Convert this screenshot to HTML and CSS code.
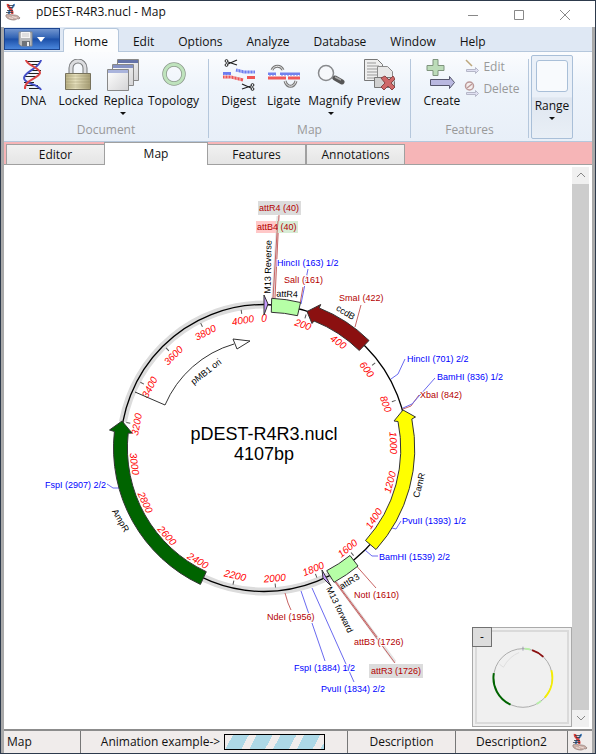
FILE: index.html
```html
<!DOCTYPE html>
<html lang="en">
  <head>
    <meta charset="UTF-8" />
    <meta name="viewport" content="width=device-width, initial-scale=1.0" />
    <title>pDEST-R4R3.nucl - Map</title>
    <link rel="stylesheet" href="styles.css">
  </head>
  <body>
    <!-- shared drawings -->
    <svg class="defs" aria-hidden="true">
      <defs>
        <symbol id="logo" viewBox="0 0 18 18">
          <path d="M10 1c1 4-6 4-5 10" fill="none" stroke="#3a78b8" stroke-width="2" />
          <path d="M4 1c-1 4 6 5 4 10" fill="none" stroke="#d8403a" stroke-width="2.500" />
          <path d="M4 2.500h6M5 4.500h4M3 7.500h6M2 9.500h7" stroke="#303848" stroke-width=".8" />
          <path d="M2 12c2-2 5 0 7 0s5 0 7 3l-1 1c-2-1-3 1-5 1-4 0-9-2-8-5z" fill="#cbb0a8" stroke="#8b7772" stroke-width=".7" />
          <path d="M8 13.500l5 1.500M5 14.500l4 1" stroke="#f3e5df" stroke-width=".8" />
        </symbol>
        <linearGradient id="silver" x1="0" y1="0" x2="1" y2="1">
          <stop offset="0" stop-color="#fff" />
          <stop offset="1" stop-color="#d4d4d6" />
        </linearGradient>
        <linearGradient id="brass" x1="0" y1="0" x2="1" y2="0">
          <stop offset="0" stop-color="#b9b185" />
          <stop offset=".4" stop-color="#e6e0bd" />
          <stop offset="1" stop-color="#a79e75" />
        </linearGradient>
        <symbol id="scissors" viewBox="0 0 14 8">
          <path d="M4 3l9 3M4 5l9-4" stroke="#222" stroke-width="1.300" />
          <circle cx="2.500" cy="2" r="1.400" fill="none" stroke="#222" />
          <circle cx="2.500" cy="6" r="1.400" fill="none" stroke="#222" />
        </symbol>
      </defs>
    </svg>

    <div class="window">
      <header class="titlebar">
        <svg class="logo"><use href="#logo" /></svg>
        <h1>pDEST-R4R3.nucl - Map</h1>
        <button aria-label="Minimize"><svg viewBox="0 0 12 12"><path d="M1 6.500h10" /></svg></button>
        <button aria-label="Maximize"><svg viewBox="0 0 12 12"><path d="M1.500 1.500h9v9h-9z" /></svg></button>
        <button aria-label="Close"><svg viewBox="0 0 12 12"><path d="M1 1l10 10M11 1L1 11" /></svg></button>
      </header>

      <div class="frame">
        <nav class="menu">
          <button class="file" aria-label="File">
            <svg width="28" height="16" viewBox="0 0 28 16">
              <path d="M1 1h13v14H3l-2-2z" fill="#b9bbbd" stroke="#85888d" />
              <path d="M3 1h9v6H3z" fill="#f5f5f5" />
              <path d="M4 3h7M4 5h7" stroke="#c9c9c9" />
              <path d="M4 10h8v5H4z" fill="#6f7378" />
              <path d="M9 11h2v4H9z" fill="#eee" />
              <path d="M19 6h8l-4 5z" fill="#fff" />
            </svg>
          </button>
          <button class="active">Home</button>
          <button>Edit</button>
          <button>Options</button>
          <button>Analyze</button>
          <button>Database</button>
          <button>Window</button>
          <button>Help</button>
        </nav>

        <div class="ribbon">
          <section class="group">
            <div class="tools">
              <button class="tool">
                <svg viewBox="0 0 32 32">
                  <path d="M10 2.500h14M12 5.500h9M13 11.500h11M10 14.500h13M8 17.500h12M7 23.500h10M8 26.500h13M12 29.500h11" stroke="#222" stroke-width="1.200" />
                  <path d="M24 1C23 9 7 13 7 19s15 6 17 12" fill="none" stroke="#4450c8" stroke-width="2" />
                  <path d="M9 1c0 5 15 8 14 13S7 21 8 30" fill="none" stroke="#dc4545" stroke-width="2" />
                </svg>
                DNA
              </button>
              <button class="tool">
                <svg viewBox="0 0 32 32">
                  <path d="M9 15V9a7 7 0 0 1 14 0v6" fill="none" stroke="#77797b" stroke-width="5" />
                  <path d="M9 15V9a7 7 0 0 1 14 0v6" fill="none" stroke="#dcdde0" stroke-width="3" />
                  <path d="M3.500 14.500h25v16h-25z" fill="url(#brass)" stroke="#77725d" />
                  <path d="M4 17h24M4 20h24M4 23h24M4 26h24M4 28h24" stroke="#918963" opacity=".4" />
                </svg>
                Locked
              </button>
              <button class="tool">
                <svg viewBox="0 0 32 32">
                  <path d="M10.500.500h21v21h-21z" fill="url(#silver)" stroke="#888" />
                  <path d="M11 1h20v3H11z" fill="#6573a8" />
                  <path d="M5.500 5.500h21v21h-21z" fill="url(#silver)" stroke="#888" />
                  <path d="M6 6h20v3H6z" fill="#8592c4" />
                  <path d="M.500 10.500h21v21h-21z" fill="url(#silver)" stroke="#888" />
                  <path d="M1 11h20v3H1z" fill="#aab4dc" />
                </svg>
                Replica
                <i class="arrow"></i>
              </button>
              <button class="tool">
                <svg viewBox="0 0 32 32">
                  <circle cx="17" cy="15" r="9.500" fill="none" stroke="#8a978a" stroke-width="4.500" />
                  <circle cx="17" cy="15" r="9.500" fill="none" stroke="#bfe3bd" stroke-width="3" />
                </svg>
                Topology
              </button>
            </div>
            <h2>Document</h2>
          </section>

          <section class="group">
            <div class="tools">
              <button class="tool">
                <svg viewBox="0 0 32 32">
                  <use href="#scissors" x="1" y="0" width="14" height="8" />
                  <use href="#scissors" width="14" height="8" transform="translate(32 24) scale(-1 1)" />
                  <path d="M0 14.500h8M13 11l8 2h11M1 16v-2M4 16v-2" fill="none" stroke="#6c7df0" stroke-width="3" />
                  <path d="M0 18h8l12 3M24 18.500h8" fill="none" stroke="#ee5555" stroke-width="3" />
                  <path d="M2 15.500v4M5 15.500v4M8 16v4M11 17v4M14 18v4M17 19v4M15 10v4M18 10v4M21 11v4M24 11v4M27 11v4M30 11v4" stroke="#f4f7fc" stroke-width=".7" />
                </svg>
                Digest
              </button>
              <button class="tool">
                <svg viewBox="0 0 32 32">
                  <path d="M4 11c2-5 9-5 11 0M17 22c2 7 9 7 11 0" fill="none" stroke="#777" stroke-width="3" />
                  <path d="M4 11c2-5 9-5 11 0M17 22c2 7 9 7 11 0" fill="none" stroke="#eee" />
                  <path d="M0 15h8M12 15h20" stroke="#7282ee" stroke-width="3" />
                  <path d="M0 19h18M20 19h12" stroke="#f05a5a" stroke-width="3" />
                  <path d="M0 16.500h32" stroke="#fff" stroke-dasharray="1 2" />
                </svg>
                Ligate
              </button>
              <button class="tool">
                <svg viewBox="0 0 32 32">
                  <path d="M17 18l4 2" stroke="#888" stroke-width="2" />
                  <path d="M20 19l7 4" stroke="#555" stroke-width="5" stroke-linecap="round" />
                  <path d="M20 18l6 3" stroke="#aaa" stroke-width="1.500" />
                  <circle cx="11" cy="14" r="7.500" fill="#f6f8fb" stroke="#888a8d" stroke-width="1.500" />
                </svg>
                Magnify
                <i class="arrow"></i>
              </button>
              <button class="tool">
                <svg viewBox="0 0 32 32">
                  <path d="M1.500.500h13l5 5v16h-18z" fill="#eee" stroke="#777" />
                  <path d="M4 4h9M4 7h12M4 10h12M4 13h12M4 16h12M4 19h9" stroke="#999" />
                  <path d="M14.500 7.500h10l5 5v7h-15z" fill="#e8e8e8" stroke="#8b8b8b" />
                  <path d="M11.500 18.500h18l2 4v6h-20z" fill="#d0d0d0" stroke="#777" />
                  <path d="M18 19l4-2 4 4 4-4 2 3-4 4 4 4-3 3-4-4-4 4-3-3 4-4z" fill="#cf6868" stroke="#8a4444" />
                </svg>
                Preview
              </button>
            </div>
            <h2>Map</h2>
          </section>

          <section class="group">
            <div class="tools">
              <button class="tool">
                <svg viewBox="0 0 32 32">
                  <path d="M7 .500h5v6h6v5h-6v5H7v-5H1v-5h6z" fill="#bcdcb9" stroke="#7f947e" />
                  <path d="M4.500 20.500h19v-3l5 6-5 6v-3h-19z" fill="#b9b8e0" stroke="#55566c" />
                </svg>
                Create
              </button>
              <div class="small-tools">
                <button disabled>
                  <svg viewBox="0 0 16 16">
                    <path d="M2 1l6 6" stroke="#bda77c" stroke-width="1.500" />
                    <path d="M2.500 10.500h9v-2l3 3-3 3v-2h-9z" fill="#e0e0f2" stroke="#b5b7c8" />
                  </svg>
                  Edit
                </button>
                <button disabled>
                  <svg viewBox="0 0 16 16">
                    <path d="M2.500 11.500h9v-2l3 3-3 3v-2h-9z" fill="#e0e0f2" stroke="#b5b7c8" />
                    <circle cx="5.500" cy="5" r="4" fill="#f4eeee" stroke="#b99" stroke-width="1.500" />
                    <path d="M3 7l5-4" stroke="#b99" stroke-width="1.500" />
                  </svg>
                  Delete
                </button>
              </div>
            </div>
            <h2>Features</h2>
          </section>

          <button class="range">
            <span class="swatch"></span>
            Range
            <i class="arrow"></i>
          </button>
        </div>

        <div class="tabs" role="tablist">
          <button role="tab">Editor</button>
          <button role="tab" class="active" aria-selected="true">Map</button>
          <button role="tab">Features</button>
          <button role="tab">Annotations</button>
        </div>

        <main class="pane">
          <!-- plasmid map, 0,0 is the centre of the ring -->
          <svg class="plasmid" viewBox="-260 -283 568 564" preserveAspectRatio="xMidYMid meet">
            <path class="glow" d="M-141.100 -26A143.500 143.500 0 0 1 0 -143.500M66 127.500A143.500 143.500 0 0 1 -60.600 130" />
            <circle class="ring" r="143.500" />

            <g class="ticks">
              <path d="M0 -140v4" transform="rotate(17.500)" />
              <path d="M0 -140v4" transform="rotate(52.600)" />
              <path d="M0 -140v4" transform="rotate(70.100)" />
              <path d="M0 -140v4" transform="rotate(140.200)" />
              <path d="M0 -140v4" transform="rotate(157.800)" />
              <path d="M0 -140v4" transform="rotate(175.300)" />
              <path d="M0 -140v4" transform="rotate(192.800)" />
              <path d="M0 -140v4" transform="rotate(280.500)" />
              <path d="M0 -140v4" transform="rotate(298)" />
              <path d="M0 -140v4" transform="rotate(315.600)" />
              <path d="M0 -140v4" transform="rotate(333.100)" />
              <path d="M0 -140v4" transform="rotate(350.600)" />
            </g>

            <g class="scale">
              <text y="-126">0</text>
              <text y="-126" transform="rotate(17.500)">200</text>
              <text y="-126" transform="rotate(35.100)">400</text>
              <text y="-126" transform="rotate(52.600)">600</text>
              <text y="-126" transform="rotate(70.100)">800</text>
              <text y="-126" transform="rotate(87.700)">1000</text>
              <text y="134" transform="rotate(-74.800)">1200</text>
              <text y="134" transform="rotate(-57.300)">1400</text>
              <text y="134" transform="rotate(-39.800)">1600</text>
              <text y="134" transform="rotate(-22.200)">1800</text>
              <text y="134" transform="rotate(-4.700)">2000</text>
              <text y="134" transform="rotate(12.800)">2200</text>
              <text y="134" transform="rotate(30.400)">2400</text>
              <text y="134" transform="rotate(47.900)">2600</text>
              <text y="134" transform="rotate(65.400)">2800</text>
              <text y="134" transform="rotate(83)">3000</text>
              <text y="-126" transform="rotate(-79.500)">3200</text>
              <text y="-126" transform="rotate(-62)">3400</text>
              <text y="-126" transform="rotate(-44.400)">3600</text>
              <text y="-126" transform="rotate(-26.900)">3800</text>
              <text y="-126" transform="rotate(-9.400)">4000</text>
            </g>

            <!-- leader lines -->
            <g class="lead shade">
              <path d="M14 -232L9 -150M72 134L131 214" />
            </g>
            <g class="lead red">
              <path d="M15 -233L11 -150M13 -215L9 -150" />
              <path d="M39 -161L36 -144M97 -143L91 -121" />
              <path d="M155 -53L147 -42L139 -39" />
              <path d="M89 114L112 140M72 134L113 189M71 134L131 215" />
              <path d="M21 145L24 155L27 162" />
            </g>
            <g class="lead blue">
              <path d="M44 -179L37 -144M141 -89L134 -74L127 -69" />
              <path d="M171 -70L148 -44L139 -40" />
              <path d="M114 108H108L101 102" />
              <path d="M37 143L61 213M48 140L90 234" />
              <path d="M-157 36L-151 40H-145" />
            </g>

            <!-- features -->
            <g class="feature">
              <path fill="#006400" d="M-63.600 136.400A150.500 150.500 0 0 1 -149.600 -16.500L-154.500 -18L-142 -27L-132 -15L-135.800 -14.800A136.500 136.500 0 0 0 -57.700 123.700Z" />
              <path fill="#ff0" d="M147.800 -29L151.500 -31L139 -38L130 -27L134 -26.500A137 137 0 0 1 101.500 92.500L112 101.500A151 151 0 0 0 147.800 -29Z" />
              <path fill="#8b1010" d="M55.200 -140L56.700 -143.500L43 -136.500L48 -124.500L50 -127A136.500 136.500 0 0 1 95.300 -97.500L105 -107.500A150.500 150.500 0 0 0 55.200 -140Z" />
              <path fill="#b6ffa6" d="M7.700 -149.700A150 150 0 0 1 36.500 -145.500L33.500 -132.300A136 136 0 0 0 7.300 -135.700Z" />
              <path fill="#b6ffa6" d="M62.700 122.700A137 137 0 0 0 86 107.500L94 118A151 151 0 0 1 70 134.300Z" />
              <path fill="#c79bff" d="M0 -153L4 -144L0 -133Z" />
              <path fill="#c79bff" d="M58 122L67 138L59 130Z" />
              <path fill="none" d="M-129 -56L-99 -43A108 108 0 0 1 -30 -104" />
              <path fill="#fff" d="M-31 -109L-14 -107L-27 -99Z" />
            </g>
            <path class="lead blue" d="M137 73L132 81L128 80" />

            <g class="name">
              <text transform="translate(7 -181) rotate(-89)">M13 Reverse</text>
              <text transform="translate(23 -151) rotate(2)">attR4</text>
              <text transform="translate(80 -133) rotate(31)">ccdB</text>
              <text transform="translate(158 38) rotate(-75)">CamR</text>
              <text transform="translate(87 136) rotate(-31)">attR3</text>
              <text transform="translate(73 163) rotate(64)">M13 forward</text>
              <text transform="translate(-146 74) rotate(60)">AmpR</text>
              <text transform="translate(-56 -74) rotate(-38)">pMB1 ori</text>
            </g>

            <!-- cut sites -->
            <rect x="-6" y="-247" width="43" height="14" fill="#dcdcdc" />
            <rect x="-8" y="-227" width="20" height="12" fill="#ffc8c8" />
            <rect x="12" y="-227" width="22" height="12" fill="#d8ecd6" />
            <rect x="105" y="216" width="54" height="14" fill="#dcdcdc" />
            <path class="lead red" d="M14 -227L13 -215" />
            <g class="boxed red">
              <text x="-5" y="-237">attR4 (40)</text>
              <text x="-7" y="-218">attB4 (40)</text>
              <text x="107" y="226">attR3 (1726)</text>
            </g>
            <g class="site red">
              <text x="20" y="-165">SalI (161)</text>
              <text x="75" y="-147">SmaI (422)</text>
              <text x="156" y="-50">XbaI (842)</text>
              <text x="90" y="150">NotI (1610)</text>
              <text x="90" y="197">attB3 (1726)</text>
              <text x="3" y="172">NdeI (1956)</text>
            </g>
            <g class="site blue">
              <text x="13" y="-182">HincII (163) 1/2</text>
              <text x="143" y="-86">HincII (701) 2/2</text>
              <text x="173" y="-68">BamHI (836) 1/2</text>
              <text x="138" y="76">PvuII (1393) 1/2</text>
              <text x="115" y="112">BamHI (1539) 2/2</text>
              <text x="30" y="223">FspI (1884) 1/2</text>
              <text x="57" y="244">PvuII (1834) 2/2</text>
              <text x="-219" y="40">FspI (2907) 2/2</text>
            </g>

            <g class="plasmid-title">
              <text y="-8">pDEST-R4R3.nucl</text>
              <text y="12">4107bp</text>
            </g>
          </svg>

          <div class="scrollbar">
            <button aria-label="Scroll up"><svg viewBox="0 0 10 10"><path d="M1 7l4-4 4 4" /></svg></button>
            <div class="thumb"></div>
            <button aria-label="Scroll down"><svg viewBox="0 0 10 10"><path d="M1 3l4 4 4-4" /></svg></button>
          </div>

          <div class="overview">
            <svg viewBox="-47 -47 92 92">
              <circle r="30" stroke="#aaa" />
              <path d="M-24 -14L-20 -11Q-14 -22 -4 -26" stroke="#dedede" />
              <path d="M0 -32v4" stroke="#99a" />
              <g stroke-width="2">
                <path stroke="#006400" d="M-12.700 27.200A30 30 0 0 1 -29.800 -5" />
                <path stroke="#f5ee00" d="M29 -7.800A30 30 0 0 1 22.300 20" />
                <path stroke="#8b1010" d="M9.300 -28.500A30 30 0 0 1 20.800 -21.600" />
                <path stroke="#b6f0a6" d="M1.600 -30A30 30 0 0 1 7.300 -29.100M18.500 23.600A30 30 0 0 1 14.100 26.500" />
              </g>
            </svg>
            <button>-</button>
          </div>
        </main>

        <footer class="status">
          <span class="mode">Map</span>
          <span class="anim">
            Animation example-&gt;
            <span class="progress" role="progressbar" aria-label="Animation example"></span>
          </span>
          <span class="desc">Description</span>
          <span class="desc">Description2</span>
          <span class="corner"><svg class="logo"><use href="#logo" /></svg></span>
        </footer>
      </div>
    </div>
  </body>
</html>
```
FILE: styles.css
```css
* {
  box-sizing: border-box;
}

body {
  margin: 0;
  font-family: "Open Sans", "Noto Sans", sans-serif;
  font-size: 12px;
  line-height: 16px;
  color: #111;
}

h1,
h2 {
  margin: 0;
  font-size: 12px;
  font-weight: normal;
}

button {
  margin: 0;
  padding: 0;
  border: 0;
  background: none;
  font: inherit;
  color: inherit;
}

.defs {
  position: absolute;
  width: 0;
  height: 0;
}

.window {
  display: flex;
  flex-direction: column;
  height: 100vh;
  border: 1px solid #2d3a4c;
  background: #fff;
}

/* title bar */
.titlebar {
  display: flex;
  align-items: center;
  height: 26px;
  padding-right: 7px;
}

.logo {
  width: 18px;
  height: 18px;
}

.titlebar .logo {
  margin: 0 14px 4px 3px;
}

.titlebar h1 {
  flex: 1;
  padding-bottom: 4px;
}

.titlebar button {
  width: 46px;
  height: 26px;
}

.titlebar button svg {
  width: 12px;
  height: 12px;
  vertical-align: middle;
  fill: none;
  stroke: #888;
}

.frame {
  flex: 1;
  display: flex;
  flex-direction: column;
  min-height: 0;
  border: solid #a9a9a9;
  border-width: 0 3px;
}

/* ribbon */
.menu {
  display: flex;
  height: 25px;
  padding-top: 1px;
  background: #dfe8f4;
  border-bottom: 1px solid #b5c7dc;
}

.menu button {
  padding: 4px 12px 0;
}

.menu .file {
  width: 56px;
  height: 22px;
  margin-right: 3px;
  padding: 0;
  border: 1px solid #1c4590;
  background: linear-gradient(#7295cf, #2f62b4 45%, #1c4fa8 50%, #4a86dc);
}

.menu .file svg {
  vertical-align: middle;
}

.menu .active {
  height: 24px;
  margin-right: 2px;
  padding: 3px 10px 0;
  border: 1px solid #b5c7dc;
  border-bottom: 0;
  border-radius: 3px 3px 0 0;
  background: #fcfdfe;
}

.ribbon {
  display: grid;
  grid-template-columns: 205px 202px 118px auto;
  justify-content: start;
  height: 90px;
  padding: 3px 0 2px;
  border-bottom: 1px solid #b5c7dc;
  background: linear-gradient(#fbfcfe, #eef4fb 40%, #e8eff8);
}

.group {
  display: flex;
  flex-direction: column;
  margin: 4px 0 1px;
  border-right: 1px solid #b5c7dc;
  text-align: center;
}

.group h2 {
  color: #999;
}

.tools {
  flex: 1;
  display: flex;
  justify-content: center;
}

.tool {
  display: flex;
  flex-direction: column;
  align-items: center;
  min-width: 45px;
  padding: 0 2px;
}

.tool svg {
  width: 32px;
  height: 32px;
  margin-bottom: 2px;
}

.arrow {
  width: 0;
  border: 3px solid transparent;
  border-top-color: #111;
  border-bottom: 0;
  margin-top: 3px;
}

.small-tools {
  display: flex;
  flex-direction: column;
  align-items: flex-start;
  gap: 6px;
}

.small-tools button {
  display: flex;
  gap: 3px;
  color: #999;
}

.small-tools svg {
  width: 16px;
  height: 16px;
}

.range {
  display: flex;
  flex-direction: column;
  align-items: center;
  width: 42px;
  margin-left: 2px;
  padding-top: 4px;
  border: 1px solid #a9bfd8;
  border-radius: 2px;
  background: linear-gradient(#eaf0f8 50%, #dfe6f0 51%, #e9eff6);
}

.swatch {
  width: 32px;
  height: 32px;
  margin-bottom: 6px;
  border: 1px solid #a9bfd8;
  border-radius: 3px;
  background: #f8fafd;
}

/* document tabs */
.tabs {
  display: flex;
  align-items: flex-end;
  height: 23px;
  padding-left: 2px;
  border-bottom: 1px solid #a0a0a0;
  background: #f6b5b7;
}

.tabs button {
  width: 99px;
  height: 20px;
  border: 1px solid #a0a0a0;
  border-bottom: 0;
  background: linear-gradient(#f1f1f1, #e5e5e5);
}

.tabs .active {
  width: 104px;
  height: 23px;
  margin: 0 -1px -1px;
  background: #fff;
}

/* map */
.pane {
  position: relative;
  flex: 1;
  display: flex;
  min-height: 0;
  padding-right: 3px;
}

.plasmid {
  flex: 1;
  min-width: 0;
  height: 100%;
  font-family: "Liberation Sans", Arial, sans-serif;
  font-size: 9px;
}

.glow {
  fill: none;
  stroke: #dcdcdc;
  stroke-width: 8;
}

.ring {
  fill: none;
  stroke: #000;
  stroke-width: 1.3;
}

.ticks {
  stroke: #555;
}

.scale {
  fill: #f00;
  font-size: 10px;
  font-style: italic;
  text-anchor: middle;
}

.lead {
  fill: none;
  stroke-width: 1;
}

.lead.red,
.red .lead {
  stroke: #c86464;
}

.lead.blue {
  stroke: #6a6af0;
}

.lead.shade {
  stroke: #e4e4e4;
  stroke-width: 3;
}

.feature {
  stroke: #333;
  stroke-width: 1;
}

.name {
  text-anchor: middle;
}

/* white edge keeps the leader lines off the letters */
.site {
  stroke: #fff;
  stroke-width: 2;
  paint-order: stroke;
}

.site.red,
.boxed.red {
  fill: #b40000;
}

.site.blue {
  fill: #00f;
}

.plasmid-title {
  font-size: 18px;
  text-anchor: middle;
}

.scrollbar {
  display: flex;
  flex-direction: column;
  width: 17px;
  margin: 2px 0;
  background: #f0f0f0;
}

.scrollbar button {
  height: 17px;
}

.scrollbar svg {
  width: 10px;
  height: 10px;
  fill: none;
  stroke: #888;
}

.thumb {
  flex: 1;
  background: #cdcdcd;
}

.overview {
  position: absolute;
  right: 20px;
  bottom: 2px;
  width: 100px;
  height: 100px;
  padding: 2px;
  border: 1px solid #aaa;
  background: #f0f0f0;
}

.overview svg {
  width: 100%;
  height: 100%;
  border: 2px solid #dadada;
  fill: none;
}

.overview button {
  position: absolute;
  top: -1px;
  left: -1px;
  width: 20px;
  height: 20px;
  border: 1px solid #707070;
  background: #ddd;
}

/* status bar */
.status {
  display: flex;
  height: 24px;
  border-top: 2px solid #8c8c8c;
  background: #f0eceb;
}

.status > span {
  display: flex;
  align-items: center;
  justify-content: center;
  border-right: 1px solid #777;
}

.status .mode {
  width: 77px;
  padding-left: 3px;
  justify-content: flex-start;
}

.status .anim {
  flex: 1;
  gap: 4px;
  padding-right: 2px;
}

.status .desc {
  width: 108px;
}

.status .desc + .desc {
  width: 112px;
}

.status .corner {
  width: 24px;
  border-right: 0;
}

.progress {
  width: 101px;
  height: 16px;
  border: 1px solid #000;
  background: repeating-linear-gradient(118deg, #f0eceb 0 7px, #add8e6 7px 21px);
}
```
